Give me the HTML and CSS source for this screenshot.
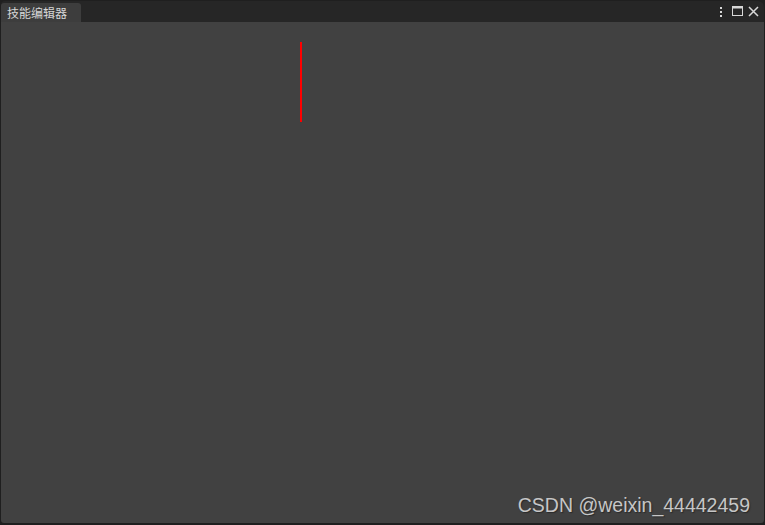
FILE: index.html
```html
<!DOCTYPE html>
<html>
<head>
<meta charset="utf-8">
<link rel="stylesheet" href="styles.css">
</head>
<body>
<div class="window">
  <div class="tabbar">
    <div class="tab">技能编辑器</div>
    <div class="spacer"></div>
    <div class="controls">
      <svg class="icon dots" width="6" height="12" viewBox="0 0 6 12"><rect x="2" y="1" width="2" height="2" fill="#d8d8d8"/><rect x="2" y="5" width="2" height="2" fill="#d8d8d8"/><rect x="2" y="9" width="2" height="2" fill="#d8d8d8"/></svg>
      <svg class="icon" width="11" height="11" viewBox="0 0 11 11"><rect x="0.5" y="0.5" width="10" height="9" fill="none" stroke="#d8d8d8"/><rect x="0.5" y="0.5" width="10" height="2" fill="#d8d8d8"/></svg>
      <svg class="icon" width="11" height="11" viewBox="0 0 11 11"><path d="M1 1 L10 10 M10 1 L1 10" stroke="#d8d8d8" stroke-width="1.5"/></svg>
    </div>
  </div>
  <div class="content">
    <div class="redline"></div>
    <div class="watermark">CSDN @weixin_44442459</div>
  </div>
</div>
</body>
</html>
```
FILE: styles.css
```css
html, body {
  margin: 0;
  padding: 0;
  background: #1f1f1f;
  width: 765px;
  height: 525px;
  overflow: hidden;
}
.window {
  box-sizing: border-box;
  width: 765px;
  height: 525px;
  padding: 1px 1px 2px 1px;
  display: flex;
  flex-direction: column;
}
.tabbar {
  height: 21px;
  background: #262626;
  display: flex;
  align-items: flex-end;
  border-radius: 4px 6px 0 0;
}
.tab {
  box-sizing: border-box;
  width: 80px;
  height: 19px;
  background: #3d3d3d;
  border-radius: 3px 3px 0 0;
  color: #d6d6d6;
  font-family: "Noto Sans CJK SC", sans-serif;
  font-size: 12px;
  line-height: 19px;
  padding-left: 6px;
}
.spacer { flex: 1; }
.controls {
  display: flex;
  align-items: center;
  gap: 5px;
  height: 21px;
  padding-right: 5px;
  align-self: flex-start;
}
.dots { margin-right: 3px; }
.icon { display: block; }
.content {
  flex: 1;
  background: #414141;
  position: relative;
  display: flex;
  align-items: flex-end;
  justify-content: flex-end;
  border-radius: 0 0 3px 3px;
}
.redline {
  position: absolute;
  left: 299px;
  top: 20px;
  width: 2px;
  height: 80px;
  background: #ff0000;
}
.watermark {
  font-family: "Liberation Sans", Arial, sans-serif;
  font-size: 19.5px;
  color: #c6c6c6;
  text-shadow: 1px 1px 1px #2a2a2a;
  padding: 0 14px 6px 0;
  line-height: 24px;
}
```
